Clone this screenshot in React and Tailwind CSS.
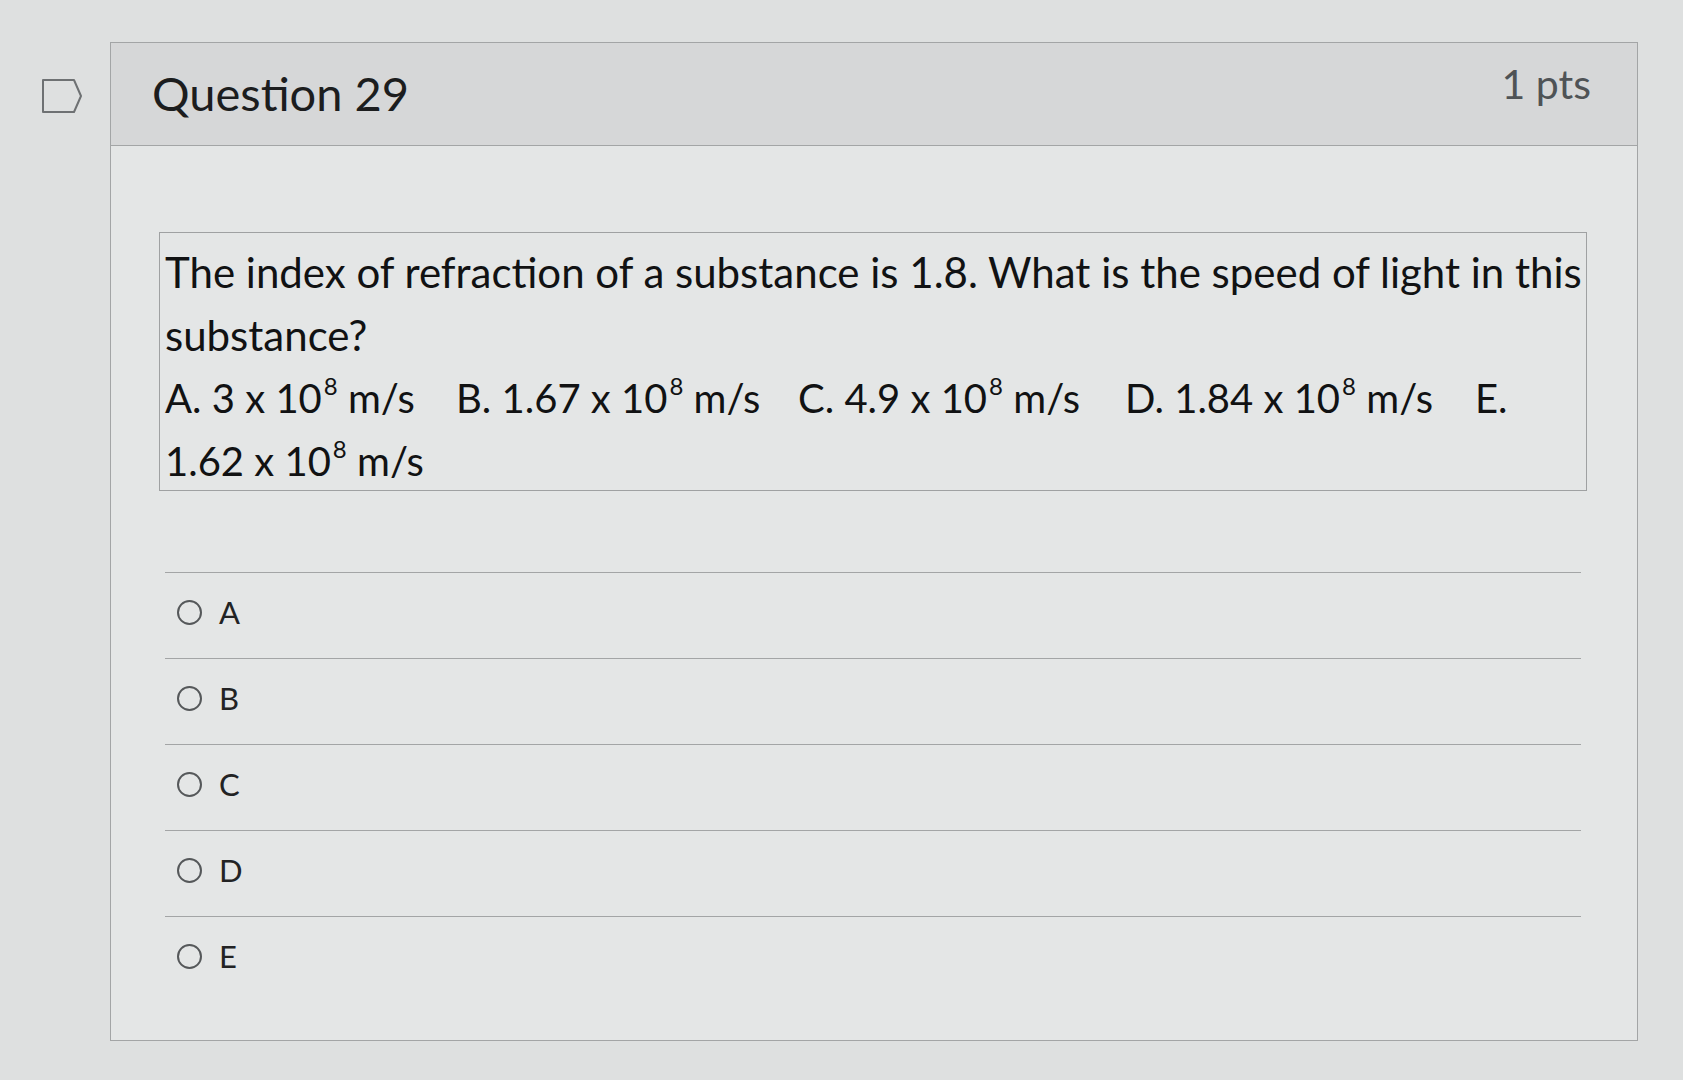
import React from "react";

// ── Superscript exponent ──────────────────────────────────────────────────────
const Exp = ({ children }) => (
  <span className="relative -top-[18px] ml-[2px] text-[24px] leading-none">{children}</span>
);

const Sci = ({ n }) => (
  <>
    {n} x 10<Exp>8</Exp> m/s
  </>
);

// ── Bookmark flag left of the question ───────────────────────────────────────
const Bookmark = () => (
  <svg width="42" height="36" viewBox="0 0 42 36" fill="none">
    <path
      d="M2 2 H33 L40 18 L33 34 H2 Z"
      stroke="#6e7173"
      strokeWidth="2"
      strokeLinejoin="round"
    />
  </svg>
);

// ── Radio answer row ─────────────────────────────────────────────────────────
const Choice = ({ label }) => (
  <div className="h-[86px] border-t-[1.5px] border-[#a3a5a6] flex items-center pl-[12px] pb-[6px]">
    <span className="w-[25px] h-[25px] rounded-full border-2 border-[#55585a] shrink-0" />
    <span className="ml-[17px] text-[31px] text-[#222324] leading-none">{label}</span>
  </div>
);

const answers = [
  { key: "A.", n: "3", w: "w-[291px]" },
  { key: "B.", n: "1.67", w: "w-[342px]" },
  { key: "C.", n: "4.9", w: "w-[327px]" },
  { key: "D.", n: "1.84", w: "w-[350px]" },
];

export default function App() {
  return (
    <div className="w-[1683px] h-[1080px] overflow-hidden bg-[#dee0e0] font-['Lato','Open_Sans',sans-serif] flex pt-[42px]">
      {/* bookmark column */}
      <div className="w-[110px] shrink-0 pl-[41px] pt-[36px]">
        <Bookmark />
      </div>

      {/* question card */}
      <div className="w-[1528px] h-[999px] border-[1.5px] border-[#a3a5a6] bg-[#e4e6e6] flex flex-col">
        <header className="h-[103px] shrink-0 bg-[#d6d7d8] border-b-[1.5px] border-[#a3a5a6] flex items-start justify-between pl-[41px] pr-[46px]">
          <h2 className="mt-[27px] text-[47px] leading-none text-[#1c1d1e]">Question 29</h2>
          <span className="mt-[20px] text-[41px] leading-none text-[#4f5356]">1 pts</span>
        </header>

        <div className="flex-1 pl-[48px] pr-[44px] pt-[86px]">
          <div className="w-[1428px] h-[259px] border-[1.5px] border-[#9fa1a2] pl-[5px] pt-[8px] text-[42px] leading-[63px] text-[#111213]">
            <p className="whitespace-nowrap">
              The index of refraction of a substance is 1.8. What is the speed of light in this
            </p>
            <p>substance?</p>
            <div className="flex whitespace-nowrap text-[40px]">
              {answers.map((a) => (
                <span key={a.key} className={`${a.w} shrink-0`}>
                  {a.key} <Sci n={a.n} />
                </span>
              ))}
              <span>E.</span>
            </div>
            <p className="whitespace-nowrap text-[40px]">
              <Sci n="1.62" />
            </p>
          </div>

          <div className="mt-[81px] ml-[6px] mr-[12px]">
            {["A", "B", "C", "D", "E"].map((l) => (
              <Choice key={l} label={l} />
            ))}
          </div>
        </div>
      </div>
    </div>
  );
}
